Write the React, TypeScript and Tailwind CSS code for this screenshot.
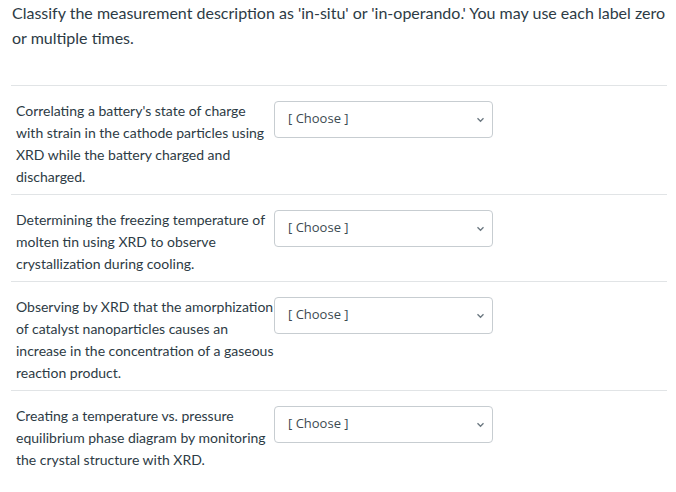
import React from 'react';

const rows: string[] = [
  "Correlating a battery's state of charge with strain in the cathode particles using XRD while the battery charged and discharged.",
  'Determining the freezing temperature of molten tin using XRD to observe crystallization during cooling.',
  'Observing by XRD that the amorphization of catalyst nanoparticles causes an increase in the concentration of a gaseous reaction product.',
  'Creating a temperature vs. pressure equilibrium phase diagram by monitoring the crystal structure with XRD.',
];

function ChooseSelect() {
  return (
    <div className="mt-[1px] flex h-[37px] w-[219px] shrink-0 items-center justify-between rounded-[4px] border border-[#c7cdd1] bg-white pb-[2px] pl-[13px] pr-[7px]">
      <span className="text-[13px] text-[#3d4a52]" style={{ fontFamily: '"Open Sans", sans-serif' }}>
        [ Choose ]
      </span>
      <svg width="9" height="6" viewBox="0 0 9 6" fill="none" className="mt-[2px]">
        <path d="M1.5 1.2 4.5 4.3 7.5 1.2" stroke="#6b7780" strokeWidth="1.3" />
      </svg>
    </div>
  );
}

export default function App() {
  return (
    <div className="h-[492px] w-[676px] bg-white text-[#2d3b45]" style={{ fontFamily: 'Lato, sans-serif' }}>
      <p className="w-[676px] pl-[12px] pr-[4px] text-[16px] leading-[25px]">
        Classify the measurement description as 'in-situ' or 'in-operando.' You may use each label zero or multiple times.
      </p>
      <div className="ml-[11px] mt-[35px] w-[656px]">
        {rows.map((text, i) => (
          <div key={i} className="flex border-t border-[#e1e4e6] pb-[6px] pl-[5px] pt-[14px]">
            <div className="w-[258px] shrink-0 text-[14px] leading-[22px]">{text}</div>
            <ChooseSelect />
          </div>
        ))}
      </div>
    </div>
  );
}
